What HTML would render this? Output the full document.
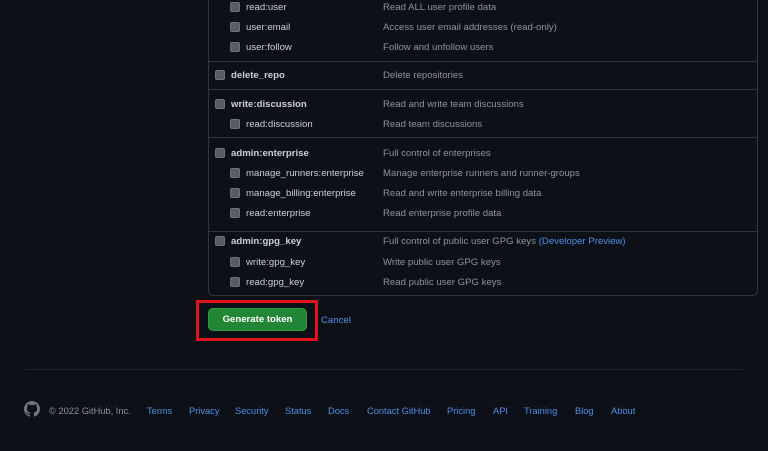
<!DOCTYPE html>
<html><head><meta charset="utf-8"><style>
*{margin:0;padding:0;box-sizing:border-box}
body{width:768px;height:451px;background:#0d1117;font-family:"Liberation Sans",sans-serif;font-size:9.6px;color:#c9d1d9;position:relative;overflow:hidden}
.a{position:absolute;white-space:nowrap;line-height:12px;margin-top:1px}
.box{position:absolute;left:208px;top:-10px;width:550px;height:306px;border:1px solid #30363d;border-radius:0 0 5px 5px}
.sep{position:absolute;left:208px;width:550px;height:1px;background:#30363d}
.cb{position:absolute;width:10px;height:10px;background:#6e7681;border:1px solid #8b949e;border-radius:2px;opacity:.75;margin-top:1px}
.d{color:#8b949e}
b{font-weight:bold;color:#c9d1d9}
.l{color:#4e8ee6}
.f{font-size:9.3px}
</style></head><body>
<div class="box"></div>
<div class="sep" style="top:61px"></div>
<div class="sep" style="top:89px"></div>
<div class="sep" style="top:137px"></div>
<div class="sep" style="top:231px"></div>

<div class="cb" style="left:230px;top:1px"></div><div class="a" style="left:246px;top:1px">read:user</div><div class="a d" style="left:383px;top:1px">Read ALL user profile data</div>
<div class="cb" style="left:230px;top:21px"></div><div class="a" style="left:246px;top:21px">user:email</div><div class="a d" style="left:383px;top:21px">Access user email addresses (read-only)</div>
<div class="cb" style="left:230px;top:41px"></div><div class="a" style="left:246px;top:41px">user:follow</div><div class="a d" style="left:383px;top:41px">Follow and unfollow users</div>

<div class="cb" style="left:215px;top:69px"></div><div class="a" style="left:231px;top:69px"><b>delete_repo</b></div><div class="a d" style="left:383px;top:69px">Delete repositories</div>

<div class="cb" style="left:215px;top:98px"></div><div class="a" style="left:231px;top:98px"><b>write:discussion</b></div><div class="a d" style="left:383px;top:98px">Read and write team discussions</div>
<div class="cb" style="left:230px;top:118px"></div><div class="a" style="left:246px;top:118px">read:discussion</div><div class="a d" style="left:383px;top:118px">Read team discussions</div>

<div class="cb" style="left:215px;top:147px"></div><div class="a" style="left:231px;top:147px"><b>admin:enterprise</b></div><div class="a d" style="left:383px;top:147px">Full control of enterprises</div>
<div class="cb" style="left:230px;top:167px"></div><div class="a" style="left:246px;top:167px">manage_runners:enterprise</div><div class="a d" style="left:383px;top:167px">Manage enterprise runners and runner-groups</div>
<div class="cb" style="left:230px;top:187px"></div><div class="a" style="left:246px;top:187px">manage_billing:enterprise</div><div class="a d" style="left:383px;top:187px">Read and write enterprise billing data</div>
<div class="cb" style="left:230px;top:207px"></div><div class="a" style="left:246px;top:207px">read:enterprise</div><div class="a d" style="left:383px;top:207px">Read enterprise profile data</div>

<div class="cb" style="left:215px;top:235px"></div><div class="a" style="left:231px;top:235px"><b>admin:gpg_key</b></div><div class="a d" style="left:383px;top:235px">Full control of public user GPG keys <span class="l">(Developer Preview)</span></div>
<div class="cb" style="left:230px;top:256px"></div><div class="a" style="left:246px;top:256px">write:gpg_key</div><div class="a d" style="left:383px;top:256px">Write public user GPG keys</div>
<div class="cb" style="left:230px;top:276px"></div><div class="a" style="left:246px;top:276px">read:gpg_key</div><div class="a d" style="left:383px;top:276px">Read public user GPG keys</div>

<div style="position:absolute;left:196px;top:300px;width:122px;height:41px;border:3px solid #e0141e"></div>
<div style="position:absolute;left:208px;top:308px;width:99px;height:23px;background:#238636;border-radius:5px;border:1px solid #2ea043;color:#fff;font-weight:bold;text-align:center;line-height:21px">Generate token</div>
<div class="a l" style="left:321px;top:314px">Cancel</div>

<div style="position:absolute;left:25px;top:369px;width:718px;height:1px;background:#21262d"></div>
<svg style="position:absolute;left:24px;top:401px" width="16" height="16" viewBox="0 0 16 16"><path fill="#6e7681" d="M8 0C3.58 0 0 3.58 0 8c0 3.54 2.290 6.53 5.47 7.59.4.07.55-.17.55-.38 0-.19-.01-.82-.01-1.49-2.01.37-2.53-.49-2.690-.94-.09-.23-.48-.94-.82-1.13-.28-.15-.68-.52-.01-.53.63-.01 1.08.58 1.23.82.72 1.21 1.87.87 2.33.66.07-.52.28-.87.51-1.07-1.78-.2-3.64-.89-3.64-3.95 0-.87.31-1.59.82-2.15-.08-.2-.36-1.02.08-2.12 0 0 .67-.21 2.2.82.64-.18 1.32-.27 2-.27.68 0 1.36.09 2 .27 1.53-1.04 2.2-.82 2.2-.82.44 1.1.16 1.92.08 2.12.51.56.82 1.27.82 2.15 0 3.07-1.87 3.75-3.65 3.95.29.25.54.73.54 1.48 0 1.07-.01 1.93-.01 2.2 0 .21.15.46.55.38A8.013 8.013 0 0016 8c0-4.42-3.58-8-8-8z"/></svg>
<div class="a d f" style="left:49px;top:404px">© 2022 GitHub, Inc.</div>
<div class="a l f" style="left:147px;top:404px">Terms</div>
<div class="a l f" style="left:189px;top:404px">Privacy</div>
<div class="a l f" style="left:235px;top:404px">Security</div>
<div class="a l f" style="left:285px;top:404px">Status</div>
<div class="a l f" style="left:328px;top:404px">Docs</div>
<div class="a l f" style="left:367px;top:404px">Contact GitHub</div>
<div class="a l f" style="left:447px;top:404px">Pricing</div>
<div class="a l f" style="left:493px;top:404px">API</div>
<div class="a l f" style="left:524px;top:404px">Training</div>
<div class="a l f" style="left:575px;top:404px">Blog</div>
<div class="a l f" style="left:611px;top:404px">About</div>
</body></html>
